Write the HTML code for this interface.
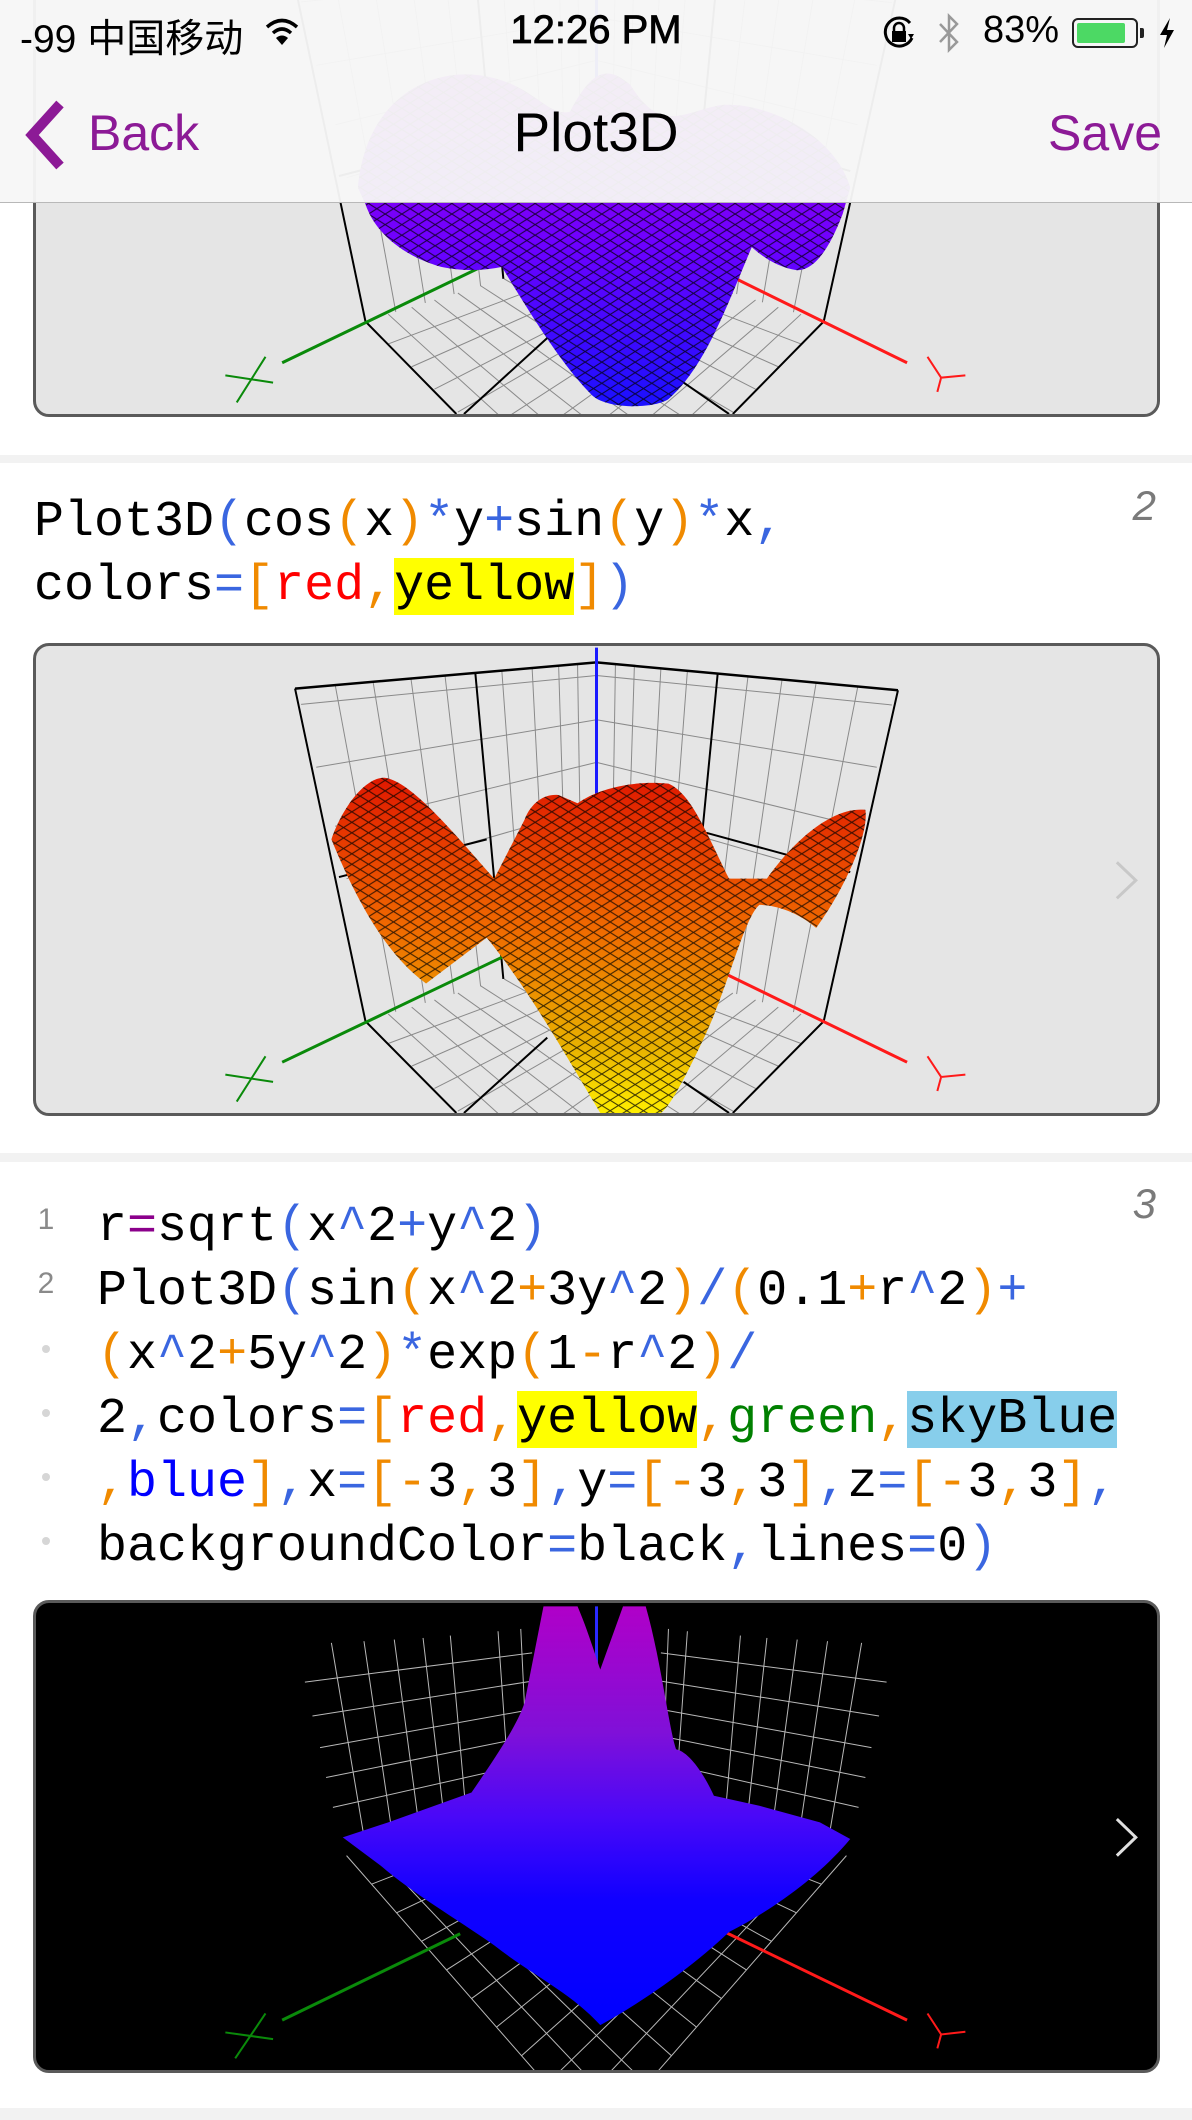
<!DOCTYPE html>
<html><head><meta charset="utf-8"><style>
*{margin:0;padding:0;box-sizing:border-box}
body{width:1192px;height:2120px;background:#fff;position:relative;overflow:hidden;font-family:"Liberation Sans","Noto Sans CJK SC",sans-serif}
.card{position:absolute;left:33px;width:1127px;border:3px solid #5a5a5a;border-radius:16px;overflow:hidden;background:#e5e5e5}
.card svg{position:absolute;left:0;top:0;width:100%;height:100%}
.band{position:absolute;left:0;width:1192px;background:#f2f2f2}
.code{position:absolute;font-family:"Liberation Mono",monospace;font-size:50px;line-height:64px;color:#000;white-space:pre}
.b{color:#3a66e0}.o{color:#f08a00}.r{color:#ff0000}.g{color:#008000}.bl{color:#0000ff}.p{color:#8b008b}
.hy{background:#ffff00}.hs{background:#87ceeb}
.ln{position:absolute;left:36px;width:20px;text-align:center;font-family:"Liberation Sans",sans-serif;font-size:30px;color:#8a8a8a}
.dot{position:absolute;left:42px;width:8px;height:8px;border-radius:4px;background:#d6d6d6}
.num{position:absolute;right:36px;font-family:"Liberation Sans",sans-serif;font-style:italic;font-size:42px;color:#7a7a7a}
</style></head><body>

<svg width="0" height="0" style="position:absolute">
<defs>
<linearGradient id="gOr" x1="0" y1="0" x2="0" y2="1"><stop offset="0" stop-color="#e01800"/><stop offset="0.45" stop-color="#f06a00"/><stop offset="0.8" stop-color="#e8b000"/><stop offset="1" stop-color="#ffee00"/></linearGradient>
<linearGradient id="gPu" x1="0" y1="0" x2="0" y2="1"><stop offset="0" stop-color="#a000e0"/><stop offset="0.5" stop-color="#7000ff"/><stop offset="1" stop-color="#1a10ff"/></linearGradient>
<linearGradient id="gBl" x1="0" y1="0" x2="0" y2="1"><stop offset="0" stop-color="#b000c8"/><stop offset="0.3" stop-color="#8010d8"/><stop offset="0.5" stop-color="#4a08f8"/><stop offset="0.7" stop-color="#1000ff"/><stop offset="1" stop-color="#0000ff"/></linearGradient>
<pattern id="mesh" patternUnits="userSpaceOnUse" width="22" height="32"><path d="M0 0L22 32M22 0L0 32" stroke="#000" stroke-width="2.2" opacity="0.75" fill="none"/></pattern>
<g id="frame2">
 <g stroke="#8a8a8a" stroke-width="1" fill="none">
  <path vector-effect="non-scaling-stroke" d="M395 248L785 160M415 440L785 295M440 620L785 425M455 780L785 560M1175 250L785 160M1155 440L785 295M1130 620L785 425M1115 780L785 560"/>
  <path vector-effect="non-scaling-stroke" d="M440 189L520 1186M490 179L559 1159M540 169L597 1132M585 160L632 1108M660 145L689 1067M700 137L720 1046M735 130L747 1027M760 125L766 1014M810 125L804 1013M835 131L823 1027M870 138L849 1046M905 146L875 1065M985 163L936 1108M1030 172L970 1132M1075 182L1004 1157M1130 194L1045 1187"/>
  <path vector-effect="non-scaling-stroke" d="M510 1193L815 1831M541 1172L845 1763M571 1150L875 1694M602 1129L905 1626M632 1107L935 1557M663 1086L965 1489M693 1064L995 1420M724 1043L1025 1352M754 1021L1055 1283M510 1283L815 1021M541 1352L845 1043M571 1420L875 1064M602 1489L905 1086M632 1557L935 1107M663 1626L965 1129M693 1694L995 1150M724 1763L1025 1172M754 1831L1055 1193"/>
 </g>
 <g stroke="#000" fill="none">
  <path vector-effect="non-scaling-stroke" stroke-width="2.5" d="M387 200L785 120L1183 205"/>
  <path vector-effect="non-scaling-stroke" stroke-width="2" d="M387 200L480 1215L600 1495M1183 205L1085 1215L965 1495M625 152L662 1086M945 154L906 1086M610 1495L720 1265M900 1400L960 1495M445 775L640 660M930 640L1120 760"/>
 </g>
 <path vector-effect="non-scaling-stroke" stroke="#1a1aff" stroke-width="3" d="M785 75L785 560"/>
 <path vector-effect="non-scaling-stroke" stroke="#0a8a0a" stroke-width="3" d="M370 1340L660 1020"/>
 <path vector-effect="non-scaling-stroke" stroke="#ff1a1a" stroke-width="3" d="M955 1070L1195 1340"/>
 <path vector-effect="non-scaling-stroke" stroke="#0a8a0a" stroke-width="2" fill="none" d="M310 1460L348 1322M295 1378L358 1400"/>
 <path vector-effect="non-scaling-stroke" stroke="#ff1a1a" stroke-width="2" fill="none" d="M1222 1322L1240 1385L1272 1378M1240 1385L1235 1428"/>
</g>
</defs></svg>

<!-- Card 1 -->
<div class="card" style="top:-58px;height:475px">
<svg viewBox="45 -174 1480 1419" preserveAspectRatio="none">
 <use href="#frame2" transform="translate(0,-250)"/>
 <path d="M470 560C480 300 560 200 630 220C700 240 720 350 750 330C780 200 800 190 830 250C870 400 900 330 950 310C1010 300 1100 400 1120 560L1110 640C1090 760 1070 810 1050 810C1020 800 1000 760 990 740C960 900 930 1100 880 1200C860 1230 800 1230 780 1190C740 1100 700 950 660 800C640 810 610 815 580 800C520 760 490 680 480 610Z" fill="url(#gPu)"/>
 <path d="M470 560C480 300 560 200 630 220C700 240 720 350 750 330C780 200 800 190 830 250C870 400 900 330 950 310C1010 300 1100 400 1120 560L1110 640C1090 760 1070 810 1050 810C1020 800 1000 760 990 740C960 900 930 1100 880 1200C860 1230 800 1230 780 1190C740 1100 700 950 660 800C640 810 610 815 580 800C520 760 490 680 480 610Z" fill="url(#mesh)"/>
</svg>
</div>

<!-- Status + nav -->
<div style="position:absolute;left:0;top:0;width:1192px;height:203px;background:rgba(247,247,247,0.96);border-bottom:1px solid #b8b8b8"></div>
<div style="position:absolute;left:20px;top:8px;font-size:39px;color:#000">-99 中国移动</div>
<svg style="position:absolute;left:264px;top:16px" width="36" height="32" viewBox="0 0 36 32"><path d="M3 11Q18 -2 33 11" stroke="#000" stroke-width="3.5" fill="none"/><path d="M9 17Q18 9 27 17" stroke="#000" stroke-width="3.5" fill="none"/><path d="M18 29L12 22Q18 17 24 22Z" fill="#000"/></svg>
<div style="position:absolute;left:0;width:1192px;top:8px;text-align:center;font-size:40px;color:#000;-webkit-text-stroke:0.8px #000">12:26 PM</div>
<svg style="position:absolute;left:880px;top:14px" width="40" height="40" viewBox="0 0 40 40"><path d="M32 24A14 14 0 1 1 30 9" stroke="#000" stroke-width="3" fill="none"/><path d="M28 20l6 0-3 5z" fill="#000"/><rect x="12" y="17" width="14" height="11" fill="#000"/><path d="M14 17v-3a5 5 0 0 1 10 0v3" stroke="#000" stroke-width="2.5" fill="none"/></svg>
<svg style="position:absolute;left:936px;top:12px" width="26" height="44" viewBox="0 0 26 44"><path d="M4 12L21 30L13 38V4L21 12L4 30" stroke="#999" stroke-width="2.5" fill="none"/></svg>
<div style="position:absolute;left:983px;top:9px;font-size:38px;color:#000">83%</div>
<div style="position:absolute;left:1072px;top:18px;width:66px;height:30px;border:2.5px solid #222;border-radius:6px;padding:3px"><div style="width:48px;height:100%;background:#4cd964;border-radius:2px"></div></div>
<div style="position:absolute;left:1140px;top:28px;width:4px;height:10px;background:#222;border-radius:0 2px 2px 0"></div>
<svg style="position:absolute;left:1158px;top:18px" width="18" height="30" viewBox="0 0 18 30"><path d="M12 0L2 17H9L6 30L16 12H9Z" fill="#000"/></svg>

<svg style="position:absolute;left:22px;top:100px" width="44" height="70" viewBox="0 0 44 70"><path d="M38 4L10 35L38 66" stroke="#8c1a96" stroke-width="10" fill="none"/></svg>
<div style="position:absolute;left:88px;top:104px;font-size:50px;color:#8c1a96">Back</div>
<div style="position:absolute;left:0;width:1192px;top:100px;text-align:center;font-size:55px;color:#000">Plot3D</div>
<div style="position:absolute;right:30px;top:104px;font-size:50px;color:#8c1a96">Save</div>

<div class="band" style="top:455px;height:8px"></div>

<!-- Section 2 -->
<div class="num" style="top:482px">2</div>
<div class="code" style="left:34px;top:491px">Plot3D<span class="b">(</span>cos<span class="o">(</span>x<span class="o">)</span><span class="b">*</span>y<span class="b">+</span>sin<span class="o">(</span>y<span class="o">)</span><span class="b">*</span>x<span class="b">,</span>
colors<span class="b">=</span><span class="o">[</span><span class="r">red</span><span class="o">,</span><span class="hy">yellow</span><span class="o">]</span><span class="b">)</span></div>

<div class="card" style="top:643px;height:473px">
<svg viewBox="45 70 1480 1425" preserveAspectRatio="none">
 <use href="#frame2"/>
 <path d="M435 660C450 560 480 470 505 472C540 480 600 650 650 780L690 600C700 540 720 520 735 525L760 550C790 500 840 480 880 490C910 520 930 640 960 780L1010 780C1050 650 1100 560 1140 570C1145 650 1110 820 1075 930C1050 880 1020 860 1000 860C980 900 960 1100 930 1250C900 1400 880 1480 870 1495L790 1495C740 1300 690 1100 640 960L560 1100C500 1000 460 800 435 660Z" fill="url(#gOr)"/>
 <path d="M435 660C450 560 480 470 505 472C540 480 600 650 650 780L690 600C700 540 720 520 735 525L760 550C790 500 840 480 880 490C910 520 930 640 960 780L1010 780C1050 650 1100 560 1140 570C1145 650 1110 820 1075 930C1050 880 1020 860 1000 860C980 900 960 1100 930 1250C900 1400 880 1480 870 1495L790 1495C740 1300 690 1100 640 960L560 1100C500 1000 460 800 435 660Z" fill="url(#mesh)"/>
 <path vector-effect="non-scaling-stroke" d="M1472 730L1497 785L1472 840" stroke="#c8c8c8" stroke-width="3" fill="none"/>
</svg>
</div>

<div class="band" style="top:1153px;height:9px"></div>

<!-- Section 3 -->
<div class="num" style="top:1180px">3</div>
<div class="ln" style="top:1203px">1</div>
<div class="ln" style="top:1267px">2</div>
<div class="dot" style="top:1345px"></div>
<div class="dot" style="top:1409px"></div>
<div class="dot" style="top:1473px"></div>
<div class="dot" style="top:1537px"></div>
<div class="code" style="left:97px;top:1196px">r<span class="p">=</span>sqrt<span class="b">(</span>x<span class="b">^</span>2<span class="b">+</span>y<span class="b">^</span>2<span class="b">)</span>
Plot3D<span class="b">(</span>sin<span class="o">(</span>x<span class="b">^</span>2<span class="o">+</span>3y<span class="b">^</span>2<span class="o">)</span><span class="b">/</span><span class="o">(</span>0.1<span class="o">+</span>r<span class="b">^</span>2<span class="o">)</span><span class="b">+</span>
<span class="o">(</span>x<span class="b">^</span>2<span class="o">+</span>5y<span class="b">^</span>2<span class="o">)</span><span class="b">*</span>exp<span class="o">(</span>1<span class="o">-</span>r<span class="b">^</span>2<span class="o">)</span><span class="b">/</span>
2<span class="b">,</span>colors<span class="b">=</span><span class="o">[</span><span class="r">red</span><span class="o">,</span><span class="hy">yellow</span><span class="o">,</span><span class="g">green</span><span class="o">,</span><span class="hs">skyBlue</span>
<span class="o">,</span><span class="bl">blue</span><span class="o">]</span><span class="b">,</span>x<span class="b">=</span><span class="o">[-</span>3<span class="o">,</span>3<span class="o">]</span><span class="b">,</span>y<span class="b">=</span><span class="o">[-</span>3<span class="o">,</span>3<span class="o">]</span><span class="b">,</span>z<span class="b">=</span><span class="o">[-</span>3<span class="o">,</span>3<span class="o">]</span><span class="b">,</span>
backgroundColor<span class="b">=</span>black<span class="b">,</span>lines<span class="b">=</span>0<span class="b">)</span></div>

<div class="card" style="top:1600px;height:473px;background:#000">
<svg viewBox="45 30 1480 1405" preserveAspectRatio="none">
 <g stroke="#b8b8b8" stroke-width="1" fill="none">
  <path vector-effect="non-scaling-stroke" d="M400 268L700 180M410 370L700 265M420 465L700 350M428 555L700 430M437 645L700 510M1168 268L870 180M1158 370L870 265M1148 465L870 350M1140 555L870 430M1131 645L870 510"/>
  <path vector-effect="non-scaling-stroke" d="M435 150L480 760M478 145L515 720M518 140L550 690M556 135L583 660M592 128L612 640M655 115L670 600M685 108L695 580M1135 150L1090 760M1090 145L1053 720M1050 140L1018 690M1010 135L985 660M975 128L956 640M905 115L890 600M880 108L872 580"/>
  <path vector-effect="non-scaling-stroke" d="M488 767L818 1564M521 744L851 1478M554 721L884 1392M587 698L917 1306M620 675L950 1220M653 652L983 1134M686 629L1016 1048M719 606L1049 962M752 583L1082 876M488 876L818 583M521 962L851 606M554 1048L884 629M587 1134L917 652M620 1220L950 675M653 1306L983 698M686 1392L1016 721M719 1478L1049 744M752 1564L1082 767M455 790L785 1650M1115 790L785 1650"/>
 </g>
 <path vector-effect="non-scaling-stroke" stroke="#2a2aff" stroke-width="3" d="M785 40L785 560"/>
 <path vector-effect="non-scaling-stroke" stroke="#0a8a0a" stroke-width="3" d="M370 1285L605 1025"/>
 <path vector-effect="non-scaling-stroke" stroke="#ff1a1a" stroke-width="3" d="M950 1015L1195 1285"/>
 <path vector-effect="non-scaling-stroke" stroke="#0a8a0a" stroke-width="2" fill="none" d="M308 1400L348 1265M295 1322L358 1342"/>
 <path vector-effect="non-scaling-stroke" stroke="#ff1a1a" stroke-width="2" fill="none" d="M1222 1265L1240 1328L1272 1320M1240 1328L1235 1370"/>
 <path d="M715 40L760 40C775 120 785 200 790 230L820 40L850 40C870 200 880 400 890 470C910 480 930 560 940 610L1000 640L1080 690L1120 740C1080 850 1020 950 960 1020C900 1150 830 1250 790 1300C750 1200 700 1150 650 1060C600 980 540 900 500 820L450 735L510 690L620 600C650 500 680 400 690 330Z" fill="url(#gBl)"/>
 <path vector-effect="non-scaling-stroke" d="M1472 680L1497 735L1472 790" stroke="#e0e0e0" stroke-width="3" fill="none"/>
</svg>
</div>

<div class="band" style="top:2108px;height:12px"></div>
</body></html>
